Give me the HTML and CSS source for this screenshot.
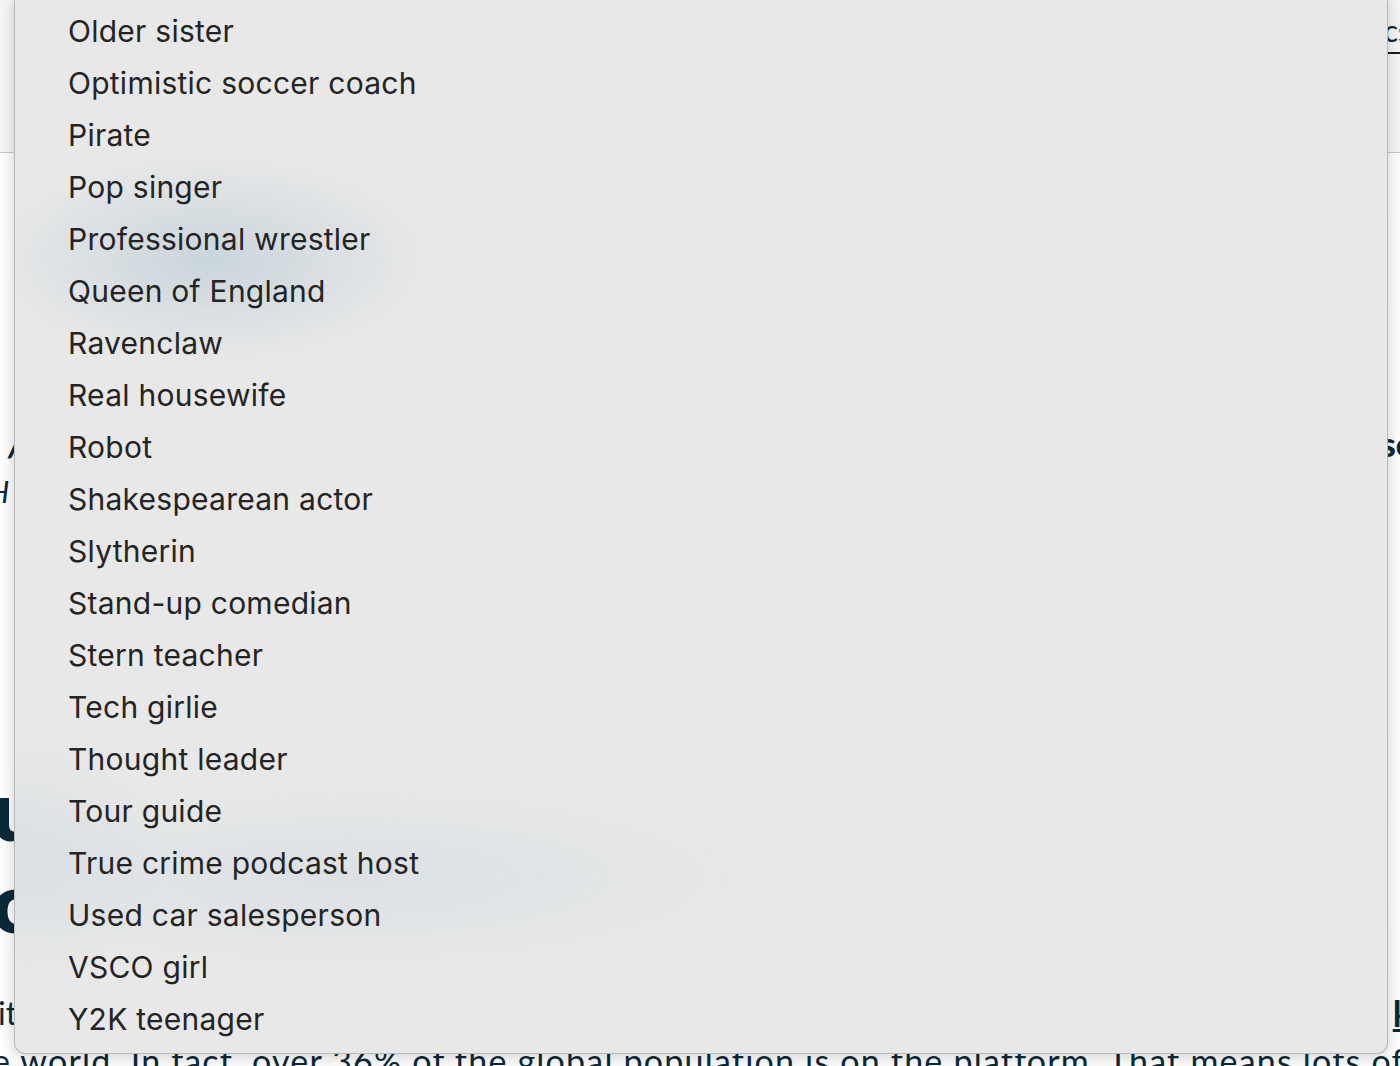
FILE: index.html
```html
<!DOCTYPE html>
<html lang="en">
<head>
<meta charset="utf-8">
<title>Persona picker</title>
<link rel="stylesheet" href="styles.css">
</head>
<body>
<div class="page">
  <header class="topbar">
    <span class="spacer"></span>
    <a class="nav-link" href="#">Docs</a>
  </header>
  <section class="quote-row">
    <span class="quote-mark">/</span>
    <span class="quote-right">Use</span>
  </section>
  <section class="quote-row small">
    <span class="quote-sub">H</span>
    <span class="quote-tick">r</span>
  </section>
  <section class="hero">
    <h1 class="hero-line">u</h1>
    <h1 class="hero-line">c</h1>
  </section>
  <section class="body-row">
    <span class="body-left">it</span>
    <a class="body-link" href="#">k</a>
  </section>
  <p class="body-text">e world. In fact, over 36% of the global population is on the platform. That means lots of</p>
</div>

<div class="menu" role="listbox">
  <div class="option">Older sister</div>
  <div class="option">Optimistic soccer coach</div>
  <div class="option">Pirate</div>
  <div class="option">Pop singer</div>
  <div class="option">Professional wrestler</div>
  <div class="option">Queen of England</div>
  <div class="option">Ravenclaw</div>
  <div class="option">Real housewife</div>
  <div class="option">Robot</div>
  <div class="option">Shakespearean actor</div>
  <div class="option">Slytherin</div>
  <div class="option">Stand-up comedian</div>
  <div class="option">Stern teacher</div>
  <div class="option">Tech girlie</div>
  <div class="option">Thought leader</div>
  <div class="option">Tour guide</div>
  <div class="option">True crime podcast host</div>
  <div class="option">Used car salesperson</div>
  <div class="option">VSCO girl</div>
  <div class="option">Y2K teenager</div>
</div>
</body>
</html>
```

FILE: styles.css
```css
html, body {
  margin: 0;
  padding: 0;
  height: 100%;
  overflow: hidden;
  background: #ffffff;
}

body {
  font-family: Lato, "Liberation Sans", sans-serif;
  color: #0b2a3a;
  position: relative;
}

/* ---------- page behind the menu ---------- */
.page {
  display: flex;
  flex-direction: column;
  margin: 0 -14px 0 -8px;
}

.topbar {
  display: flex;
  justify-content: space-between;
  align-items: flex-start;
  height: 152px;
  border-bottom: 1px solid #c9c9c9;
  background: #f7f7f7;
}

.nav-link {
  font-size: 30px;
  line-height: 40px;
  padding: 10px 3px 0 0;
  color: #0b2a3a;
  text-decoration: none;
  border-bottom: 2px solid #1d1d1d;
  height: 42px;
}

.quote-row {
  display: flex;
  justify-content: space-between;
  margin-top: 270px;
  height: 40px;
  font-size: 34px;
  font-weight: 900;
  font-style: italic;
}

.quote-mark { padding-left: 16px; }
.quote-right { font-style: normal; }

.quote-row.small {
  margin-top: 10px;
  font-weight: 400;
  font-size: 30px;
}

.quote-sub { margin-left: -4px; }
.quote-tick { font-size: 16px; }

.hero {
  display: flex;
  flex-direction: column;
  margin-top: 250px;
}

.hero-line {
  margin: 0;
  font-size: 84px;
  line-height: 92px;
  font-weight: 800;
  color: #0b2a3a;
}

.body-row {
  display: flex;
  justify-content: space-between;
  margin-top: 44px;
  font-size: 32px;
  line-height: 44px;
}

.body-left { padding-left: 6px; }

.body-link {
  color: #0b2a3a;
  font-weight: 700;
  font-size: 36px;
  text-decoration: underline;
  padding-right: 2px;
}

.body-text {
  margin: 6px 0 0;
  font-size: 34px;
  line-height: 40px;
  white-space: nowrap;
  color: #0b2a3a;
  letter-spacing: 1.2px;
}

/* ---------- native-style dropdown menu ---------- */
.menu {
  position: absolute;
  left: 14px;
  top: -6px;
  width: 1374px;
  box-sizing: border-box;
  padding: 10px 0 8px;
  border: 1px solid rgba(0, 0, 0, 0.2);
  border-radius: 0 0 11px 11px;
  background-color: #e8e8e8;
  background-image:
    radial-gradient(ellipse 220px 105px at 195px 264px, rgba(196, 210, 218, 0.85), rgba(196, 210, 218, 0) 100%),
    radial-gradient(ellipse 420px 95px at 330px 882px, rgba(210, 220, 226, 0.6), rgba(210, 220, 226, 0) 100%),
    radial-gradient(ellipse 160px 120px at 0px 862px, rgba(205, 216, 222, 0.5), rgba(205, 216, 222, 0) 100%);
  box-shadow: 0 0 18px rgba(0, 0, 0, 0.12), 0 6px 16px rgba(0, 0, 0, 0.08);
  font-family: Inter, "Liberation Sans", sans-serif;
}

.option {
  padding-left: 53px;
  font-size: 30px;
  line-height: 52px;
  height: 52px;
  letter-spacing: 0.25px;
  color: #242424;
  white-space: nowrap;
}
```
